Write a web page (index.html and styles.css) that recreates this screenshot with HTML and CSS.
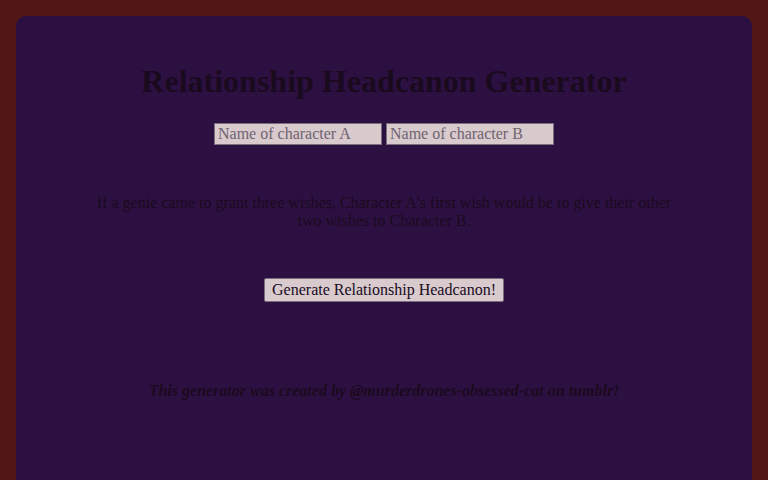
FILE: index.html
```html
<!DOCTYPE html>
<html>
<head>
  <meta charset="UTF-8">
  <meta name="viewport" content="width=device-width, initial-scale=1">
  <title>Relationship Headcanon Generator</title>
  <link rel="stylesheet" href="styles.css">
</head>
<body>
  <div class="container">
    <h1>Relationship Headcanon Generator</h1>

    <!-- Character names -->
    <div class="name-row">
      <input type="text" id="charA" placeholder="Name of character A">
      <input type="text" id="charB" placeholder="Name of character B">
    </div>

    <p id="result">If a genie came to grant three wishes, Character A's first wish would be to give their other two wishes to Character B.</p>

    <button id="generate">Generate Relationship Headcanon!</button>

    <p class="credit">This generator was created by @murderdrones-obsessed-cat on tumblr!</p>
  </div>
</body>
</html>
```

FILE: styles.css
```css
/* Global styles */
html, body {
  margin: 0;
  padding: 0;
  background-color: #521616;
  font-family: 'Liberation Serif', serif;
  color: #1a0a1e;
}
body {
  padding: 16px 16px 0 16px;
}
.container {
  background-color: #2d1042;
  border-radius: 10px 10px 0 0;
  min-height: 464px;
  padding: 47px 80px 0 80px;
  box-sizing: border-box;
  text-align: center;
}
h1 {
  font-size: 32px;
  margin: 0 0 23px 0;
  line-height: 37px;
}
.name-row {
  display: flex;
  justify-content: center;
  gap: 4px;
}
input[type="text"] {
  width: 168px;
  height: 22px;
  box-sizing: border-box;
  padding: 1px 3px;
  background-color: #d8cacd;
  border: 1px solid #7a6f7c;
  font-family: 'Liberation Serif', serif;
  font-size: 16px;
  color: #1a0a1e;
  outline: none;
}
input[type="text"]::placeholder {
  color: #6f6470;
}
#result {
  font-size: 16px;
  line-height: 18px;
  margin: 49px 0 48px 0;
}
button {
  font-family: 'Liberation Serif', serif;
  font-size: 16px;
  padding: 1px 7px;
  height: 24px;
  background-color: #d8cacd;
  border: 1px solid #7a6f7c;
  border-radius: 2px;
  color: #1a0a1e;
  cursor: pointer;
}
.credit {
  font-style: italic;
  font-weight: bold;
  font-size: 16px;
  margin: 80px 0 0 0;
}
```
